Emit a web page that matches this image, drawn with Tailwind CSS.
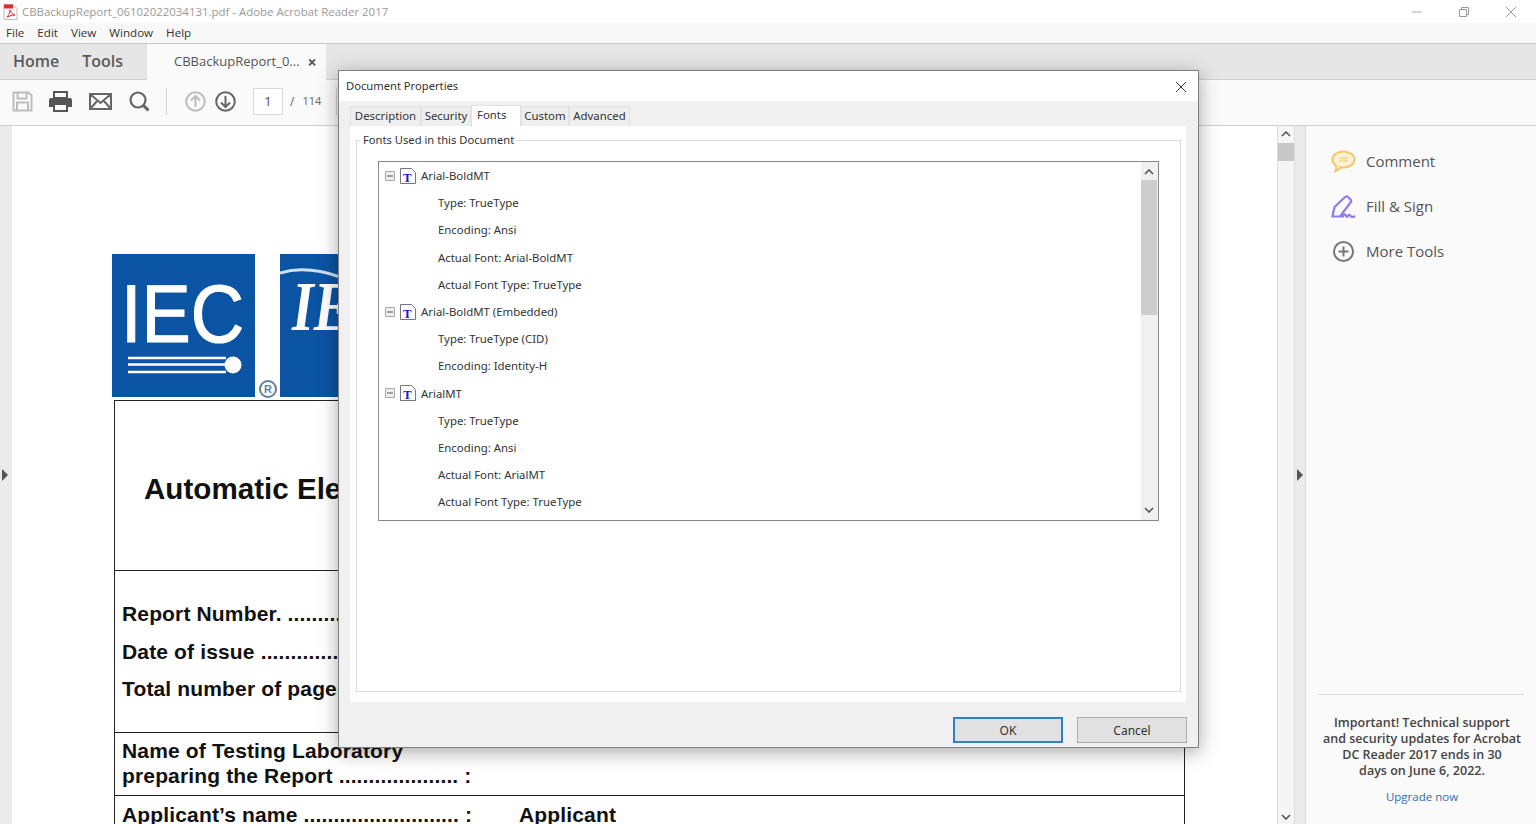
<!DOCTYPE html>
<html lang="en">

<head>
    <meta charset="UTF-8">
    <meta name="viewport" content="width=device-width, initial-scale=1.0">
    <title>CBBackupReport_06102022034131.pdf - Adobe Acrobat Reader 2017</title>
    <script src="https://cdn.jsdelivr.net/npm/@tailwindcss/browser@4"></script>
</head>

<body class="bg-white">
    <div class="relative w-[1536px] h-[824px] overflow-hidden flex flex-col font-['Open_Sans','Noto_Sans',sans-serif] text-[#444]">

        <!-- title bar -->
        <div class="h-[23px] bg-white flex items-center shrink-0">
            <svg class="ml-[3px] w-[15px] h-[16px]" viewBox="0 0 15 16">
                <path d="M1 .5h9l4 4v11H1z" fill="#fff" stroke="#bbb" />
                <path d="M1 .5h9v4H1z" fill="#d8302a" />
                <path d="M4 13c2-2 3-5 3-7 1 3 2 4 5 5-3 0-5 1-8 2z" fill="none" stroke="#d8302a" stroke-width="1" />
            </svg>
            <span class="ml-1 text-[11.45px] text-[#9a9a9a]">CBBackupReport_06102022034131.pdf - Adobe Acrobat Reader 2017</span>
            <div class="ml-auto flex items-center">
                <svg class="w-[12px] h-[12px] mr-[35px]" viewBox="0 0 12 12"><path d="M1 6h10" stroke="#aaa" /></svg>
                <svg class="w-[12px] h-[12px] mr-[35px]" viewBox="0 0 12 12" fill="none" stroke="#999"><path d="M1.500 3.500h7v7h-7zM3.500 3.500v-2h7v7h-2" /></svg>
                <svg class="w-[12px] h-[12px] mr-[19px]" viewBox="0 0 12 12" stroke="#999"><path d="M1 1l10 10M11 1L1 11" /></svg>
            </div>
        </div>

        <!-- menu bar -->
        <div class="h-[21px] bg-[#f8f8f8] border-b border-[#c9c9c9] flex items-center pl-[6px] gap-[13px] text-[11.6px] text-[#333] shrink-0">
            <span>File</span><span>Edit</span><span>View</span><span>Window</span><span>Help</span>
        </div>

        <!-- tab row -->
        <div class="h-[36px] bg-[#e6e6e6] border-b border-[#cfcfcf] flex shrink-0">
            <div class="w-[147px] flex items-center pl-[13px] pb-[2px] gap-[23px] text-[16px] font-semibold text-[#5a5a5a]">
                <span>Home</span><span>Tools</span>
            </div>
            <div class="w-[179px] h-[36px] bg-[#fafafa] flex items-center pl-[27px] text-[13px] text-[#555]">
                <span>CBBackupReport_0...</span>
                <span class="ml-[8px] text-[16px] text-[#555] font-bold leading-none">×</span>
            </div>
        </div>

        <!-- toolbar -->
        <div class="h-[46px] bg-[#fafafa] border-b border-[#d0d0d0] flex items-center pb-[2px] shrink-0">
            <svg class="ml-[12px] w-[21px] h-[21px]" viewBox="0 0 21 21" fill="none" stroke="#bdbdbd" stroke-width="2"><path d="M1.500 1.500h15l3 3v15h-18zM5.500 1.500v6h9v-6M5 19.500v-8h11v8" /></svg>
            <svg class="ml-[16px] w-[23px] h-[21px]" viewBox="0 0 23 21"><path d="M5 1h13v6H5z" fill="none" stroke="#555" stroke-width="2" /><path d="M2 7h19a2 2 0 0 1 2 2v7h-4v-4H4v4H0V9a2 2 0 0 1 2-2z" fill="#555" /><path d="M5 13h13v7H5z" fill="none" stroke="#555" stroke-width="2" /></svg>
            <svg class="ml-[17px] w-[23px] h-[17px]" viewBox="0 0 23 17" fill="none" stroke="#666" stroke-width="2"><path d="M1 1h21v15H1zM1 1l10.500 9L22 1M1 16l7.500-8.500M22 16l-7.500-8.500" /></svg>
            <svg class="ml-[17px] w-[21px] h-[21px]" viewBox="0 0 21 21" fill="none" stroke="#666"><circle cx="9" cy="9" r="7.500" stroke-width="2.200" /><path d="M14.500 14.500l5 5" stroke-width="3" /></svg>
            <div class="ml-[16px] w-px h-[27px] bg-[#d4d4d4]"></div>
            <svg class="ml-[18px] w-[21px] h-[21px]" viewBox="0 0 21 21" fill="none" stroke="#bdbdbd" stroke-width="2"><circle cx="10.500" cy="10.500" r="9.300" /><path d="M10.500 16V5M6 9.500l4.500-4.500 4.500 4.500" /></svg>
            <svg class="ml-[9px] w-[21px] h-[21px]" viewBox="0 0 21 21" fill="none" stroke="#666" stroke-width="2"><circle cx="10.500" cy="10.500" r="9.300" /><path d="M10.500 5v11M6 11.500l4.500 4.500 4.500-4.500" /></svg>
            <div class="ml-[17px] w-[30px] h-[27px] bg-white border border-[#d8d8d8] flex items-center justify-center text-[12px] text-[#444]">1</div>
            <span class="ml-[7px] text-[12px] text-[#666]">/</span>
            <span class="ml-[8px] text-[11px] text-[#666]">114</span>
            <div class="ml-[15px] w-px h-[27px] bg-[#d4d4d4]"></div>
        </div>

        <!-- main -->
        <div class="flex flex-1 min-h-0">
            <div class="w-[12px] bg-[#ebebeb] relative flex items-center shrink-0">
                <span class="w-0 h-0 ml-[2px] border-y-[6px] border-y-transparent border-l-[6px] border-l-[#555]"></span>
            </div>

            <!-- pdf page -->
            <div class="w-[1265px] bg-white overflow-hidden pl-[100px] pt-[128px] font-['Liberation_Sans',Arial,sans-serif] font-bold text-[#111] shrink-0">
                <div class="flex gap-[25px] h-[143px]">
                    <svg class="w-[143px] h-[143px] shrink-0" viewBox="0 0 143 143">
                        <rect width="143" height="143" fill="#0b54a4" />
                        <text x="9" y="88" fill="#fff" stroke="#fff" stroke-width="1.200" font-family="Liberation Sans, sans-serif" font-size="81" font-weight="400" textLength="123" lengthAdjust="spacingAndGlyphs">IEC</text>
                        <path d="M16 104h98M16 110.500h98M16 118h98" stroke="#fff" stroke-width="2.500" />
                        <circle cx="121" cy="111" r="8.500" fill="#fff" />
                    </svg>
                    <svg class="w-[143px] h-[143px] shrink-0" viewBox="0 0 143 143">
                        <rect width="143" height="143" fill="#0b54a4" />
                        <path d="M0 19c20-6 40-3 60 4" stroke="#cfe0f2" stroke-width="3" fill="none" />
                        <text x="12" y="76" fill="#fff" font-family="Liberation Serif, serif" font-size="70" font-weight="700" font-style="italic" textLength="59" lengthAdjust="spacingAndGlyphs">IE</text>
                    </svg>
                </div>
                <div class="relative w-0 h-0">
                    <span class="absolute left-[147px] top-[-17px] w-[18px] h-[18px] rounded-full border-2 border-[#5f7fa0] text-[#5f7fa0] text-[11px] leading-[14px] text-center font-bold">R</span>
                </div>
                <div class="ml-[2px] mt-[3px] w-[1071px] border border-[#222] border-b-0">
                    <div class="h-[170px] border-b border-[#222] pl-[29px] pt-[69px] text-[29.6px] leading-[38px]">Automatic Ele</div>
                    <div class="h-[162px] border-b border-[#222] pl-[7px] pt-[24px] text-[21px] leading-[37.500px] tracking-[0.15px] whitespace-nowrap">
                        <div>Report Number. .................................</div>
                        <div>Date of issue .....................................</div>
                        <div>Total number of page</div>
                    </div>
                    <div class="h-[63px] border-b border-[#222] pl-[7px] pt-[5px] text-[21px] leading-[25px] tracking-[0.15px]">
                        <div>Name of Testing Laboratory</div>
                        <div>preparing the Report .................... :</div>
                    </div>
                    <div class="flex pl-[7px] pt-[6px] text-[21px] leading-[25px] tracking-[0.15px]">
                        <div class="w-[397px]">Applicant’s name .......................... :</div>
                        <div>Applicant</div>
                    </div>
                </div>
            </div>

            <!-- page scrollbar -->
            <div class="w-[18px] bg-[#f5f5f5] border-x border-[#dcdcdc] flex flex-col items-center shrink-0">
                <svg class="mt-[5px] w-[10px] h-[6px]" viewBox="0 0 10 6" fill="none" stroke="#555" stroke-width="1.600"><path d="M1 5l4-4 4 4" /></svg>
                <div class="mt-[6px] w-[16px] h-[18px] bg-[#c8c8c8]"></div>
                <svg class="mt-auto mb-[4px] w-[10px] h-[6px]" viewBox="0 0 10 6" fill="none" stroke="#555" stroke-width="1.600"><path d="M1 1l4 4 4-4" /></svg>
            </div>
            <div class="w-[11px] bg-[#ebebeb] border-r border-[#d8d8d8] flex items-center shrink-0">
                <span class="w-0 h-0 ml-[2px] border-y-[6px] border-y-transparent border-l-[6px] border-l-[#555]"></span>
            </div>

            <!-- right panel -->
            <div class="flex-1 bg-[#fafafa] flex flex-col pl-[12px] pr-[12px]">
                <div class="flex items-center h-[24px] mt-[23px] ml-[13px] gap-[10px] text-[15px] text-[#555]">
                    <svg class="w-[25px] h-[23px]" viewBox="0 0 25 23" fill="#fdf1d4" stroke="#f3c566" stroke-width="2"><path d="M12.500 1.500c6 0 11 3.500 11 8s-5 8-11 8c-1 0-2 0-3-.3-1 1.500-3 3-5 3.800.8-1.500 1-3 .8-5C2.500 14 1.500 12 1.500 9.500c0-4.500 5-8 11-8z" /><path d="M8 8h9M8 11h9" stroke-width="1" /></svg>
                    <span>Comment</span>
                </div>
                <div class="flex items-center h-[24px] mt-[21px] ml-[13px] gap-[10px] text-[15px] text-[#555]">
                    <svg class="w-[25px] h-[23px]" viewBox="0 0 25 23" fill="none" stroke="#8f7bee" stroke-width="2.200"><path d="M1.500 21.500L3.500 12 14 2q1.500-1.200 3 0l2.500 2.500q1.200 1.500 0 3L9 21.500zM9 21.500h3c1-2.500 2.500-3 3-1s1.500 1.500 2.500 0 2 0 2.500 1 2.500.5 4-.5" /></svg>
                    <span>Fill &amp; Sign</span>
                </div>
                <div class="flex items-center h-[24px] mt-[21px] ml-[13px] gap-[10px] text-[15px] text-[#555]">
                    <svg class="w-[25px] h-[23px]" viewBox="0 0 25 23" fill="none" stroke="#777" stroke-width="2"><circle cx="12.500" cy="11.500" r="9.500" /><path d="M12.500 6.500v10M7.500 11.500h10" /></svg>
                    <span>More Tools</span>
                </div>
                <div class="mt-auto border-t border-[#dcdcdc] h-[130px] pt-[20px] pl-[2px] text-center text-[12.500px] leading-[16px] text-[#444] font-semibold whitespace-nowrap">
                    <div>Important! Technical support</div>
                    <div>and security updates for Acrobat</div>
                    <div>DC Reader 2017 ends in 30</div>
                    <div>days on June 6, 2022.</div>
                    <div class="mt-[10px] text-[11.500px] font-normal text-[#2d6fb5]">Upgrade now</div>
                </div>
            </div>
        </div>

        <!-- document properties dialog -->
        <div class="absolute left-[338px] top-[70px] w-[861px] h-[678px] bg-[#f0f0f0] border border-[#7f7f7f] shadow-[0_4px_18px_rgba(0,0,0,0.35)] flex flex-col text-[11.4px] text-[#333] font-['Noto_Sans','Open_Sans',sans-serif]">
            <div class="h-[30px] bg-white flex items-center justify-between pl-[7px] pr-[11px] pt-px shrink-0">
                <span class="text-[11.2px] text-[#333]">Document Properties</span>
                <svg class="w-[12px] h-[12px]" viewBox="0 0 12 12" stroke="#333"><path d="M1 1l10 10M11 1L1 11" /></svg>
            </div>
            <div class="flex items-end h-[25px] pl-[11px] shrink-0">
                <div class="w-[71px] h-[20px] border border-b-0 border-[#e2e2e2] bg-[#eeeeee] flex items-center justify-center pb-px">Description</div>
                <div class="w-[50px] h-[20px] border border-b-0 border-[#e2e2e2] bg-[#eeeeee] flex items-center justify-center pb-px">Security</div>
                <div class="w-[50px] h-[22px] bg-white border border-b-0 border-[#e2e2e2] flex items-start pl-[5px] -mb-px relative">Fonts</div>
                <div class="w-[48px] h-[20px] border border-b-0 border-[#e2e2e2] bg-[#eeeeee] flex items-center justify-center pb-px">Custom</div>
                <div class="w-[61px] h-[20px] border border-b-0 border-[#e2e2e2] bg-[#eeeeee] flex items-center justify-center pb-px">Advanced</div>
            </div>
            <div class="ml-[11px] w-[836px] h-[576px] bg-white pt-[14px] pl-[6px] shrink-0">
                <div class="relative w-[825px] h-[552px] border border-[#dcdcdc] pt-[20px] pl-[21px]">
                    <span class="absolute left-[3px] top-[-9px] bg-white px-[3px] leading-[15px] text-[11.2px]">Fonts Used in this Document</span>
                    <div class="w-[781px] h-[360px] border border-[#8a8a8a] flex">
                        <div class="flex-1 pl-[6px]">
                            <div class="h-[27.200px] flex items-center gap-[5px]">
                                <svg class="w-[10px] h-[10px]" viewBox="0 0 10 10"><path d="M.5.500h9v9h-9z" fill="#eee" stroke="#aaa" /><path d="M2 5h6" stroke="#555" /></svg>
                                <svg class="w-[16px] h-[16px]" viewBox="0 0 16 16"><path d="M.5.500h11l4 4v11H.5z" fill="#fff" stroke="#777" /><text x="3" y="14" font-family="Liberation Serif, serif" font-size="13" font-weight="700" fill="#1c1cc8">T</text></svg>
                                <span>Arial-BoldMT</span>
                            </div>
                            <div class="h-[27.200px] flex items-center pl-[53px]">Type: TrueType</div>
                            <div class="h-[27.200px] flex items-center pl-[53px]">Encoding: Ansi</div>
                            <div class="h-[27.200px] flex items-center pl-[53px]">Actual Font: Arial-BoldMT</div>
                            <div class="h-[27.200px] flex items-center pl-[53px]">Actual Font Type: TrueType</div>
                            <div class="h-[27.200px] flex items-center gap-[5px]">
                                <svg class="w-[10px] h-[10px]" viewBox="0 0 10 10"><path d="M.5.500h9v9h-9z" fill="#eee" stroke="#aaa" /><path d="M2 5h6" stroke="#555" /></svg>
                                <svg class="w-[16px] h-[16px]" viewBox="0 0 16 16"><path d="M.5.500h11l4 4v11H.5z" fill="#fff" stroke="#777" /><text x="3" y="14" font-family="Liberation Serif, serif" font-size="13" font-weight="700" fill="#1c1cc8">T</text></svg>
                                <span>Arial-BoldMT (Embedded)</span>
                            </div>
                            <div class="h-[27.200px] flex items-center pl-[53px]">Type: TrueType (CID)</div>
                            <div class="h-[27.200px] flex items-center pl-[53px]">Encoding: Identity-H</div>
                            <div class="h-[27.200px] flex items-center gap-[5px]">
                                <svg class="w-[10px] h-[10px]" viewBox="0 0 10 10"><path d="M.5.500h9v9h-9z" fill="#eee" stroke="#aaa" /><path d="M2 5h6" stroke="#555" /></svg>
                                <svg class="w-[16px] h-[16px]" viewBox="0 0 16 16"><path d="M.5.500h11l4 4v11H.5z" fill="#fff" stroke="#777" /><text x="3" y="14" font-family="Liberation Serif, serif" font-size="13" font-weight="700" fill="#1c1cc8">T</text></svg>
                                <span>ArialMT</span>
                            </div>
                            <div class="h-[27.200px] flex items-center pl-[53px]">Type: TrueType</div>
                            <div class="h-[27.200px] flex items-center pl-[53px]">Encoding: Ansi</div>
                            <div class="h-[27.200px] flex items-center pl-[53px]">Actual Font: ArialMT</div>
                            <div class="h-[27.200px] flex items-center pl-[53px]">Actual Font Type: TrueType</div>
                        </div>
                        <div class="w-[17px] bg-[#f0f0f0] flex flex-col items-center pr-[1px]">
                            <svg class="mt-[7px] w-[10px] h-[6px]" viewBox="0 0 10 6" fill="none" stroke="#555" stroke-width="1.600"><path d="M1 5l4-4 4 4" /></svg>
                            <div class="mt-[5px] w-[16px] h-[135px] bg-[#cdcdcd]"></div>
                            <svg class="mt-auto mb-[7px] w-[10px] h-[6px]" viewBox="0 0 10 6" fill="none" stroke="#555" stroke-width="1.600"><path d="M1 1l4 4 4-4" /></svg>
                        </div>
                    </div>
                </div>
            </div>
            <div class="flex justify-end gap-[14px] pr-[11px] pt-[15px] text-[12px]">
                <button class="w-[110px] h-[26px] bg-[#e1e1e1] border-2 border-[#2f7fc9] pt-px">OK</button>
                <button class="w-[110px] h-[26px] bg-[#e1e1e1] border border-[#adadad] pt-px">Cancel</button>
            </div>
        </div>
    </div>
</body>

</html>
